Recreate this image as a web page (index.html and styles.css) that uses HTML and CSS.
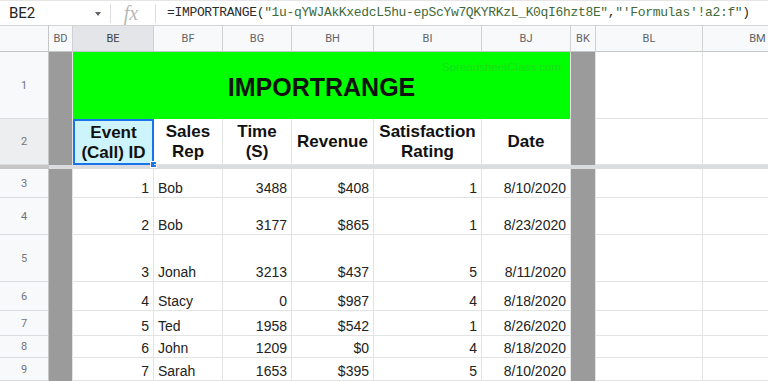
FILE: index.html
```html
<!DOCTYPE html>
<html>
<head>
<meta charset="utf-8">
<link rel="stylesheet" href="styles.css">
</head>
<body>
<div class="fbar">
  <div class="namebox"><span class="nb-text">BE2</span><span class="nb-arrow"></span></div>
  <div class="fdiv"></div>
  <div class="fx">fx</div>
  <div class="fdiv"></div>
  <div class="formula"><span class="fk">=IMPORTRANGE(</span><span class="fs">"1u-qYWJAkKxedcL5hu-epScYw7QKYRKzL_K0qI6hzt8E"</span><span class="fk">,</span><span class="fs">"'Formulas'!a2:f"</span><span class="fk">)</span></div>
</div>
<div class="sheet">
  <div class="corner"></div>
  <div class="ch">BD</div>
  <div class="ch sel">BE</div>
  <div class="ch">BF</div>
  <div class="ch">BG</div>
  <div class="ch">BH</div>
  <div class="ch">BI</div>
  <div class="ch">BJ</div>
  <div class="ch">BK</div>
  <div class="ch">BL</div>
  <div class="ch">BM</div>

  <div class="rh">1</div>
  <div class="gut"></div>
  <div class="title">IMPORTRANGE<span class="wm">SpreadsheetClass.com</span></div>
  <div class="gut"></div>
  <div class="c"></div>
  <div class="c"></div>

  <div class="rh rsel">2</div>
  <div class="gut"></div>
  <div class="c hd active">Event<br>(Call) ID<span class="handle"></span></div>
  <div class="c hd">Sales<br>Rep</div>
  <div class="c hd">Time<br>(S)</div>
  <div class="c hd">Revenue</div>
  <div class="c hd">Satisfaction<br>Rating</div>
  <div class="c hd">Date</div>
  <div class="gut"></div>
  <div class="c"></div>
  <div class="c"></div>

  <div class="sep-rh"></div>
  <div class="sep"></div>

  <div class="rh">3</div><div class="gut"></div>
  <div class="c r">1</div><div class="c">Bob</div><div class="c r">3488</div><div class="c r">$408</div><div class="c r">1</div><div class="c r">8/10/2020</div>
  <div class="gut"></div><div class="c"></div><div class="c"></div>

  <div class="rh">4</div><div class="gut"></div>
  <div class="c r">2</div><div class="c">Bob</div><div class="c r">3177</div><div class="c r">$865</div><div class="c r">1</div><div class="c r">8/23/2020</div>
  <div class="gut"></div><div class="c"></div><div class="c"></div>

  <div class="rh">5</div><div class="gut"></div>
  <div class="c r">3</div><div class="c">Jonah</div><div class="c r">3213</div><div class="c r">$437</div><div class="c r">5</div><div class="c r">8/11/2020</div>
  <div class="gut"></div><div class="c"></div><div class="c"></div>

  <div class="rh">6</div><div class="gut"></div>
  <div class="c r">4</div><div class="c">Stacy</div><div class="c r">0</div><div class="c r">$987</div><div class="c r">4</div><div class="c r">8/18/2020</div>
  <div class="gut"></div><div class="c"></div><div class="c"></div>

  <div class="rh">7</div><div class="gut"></div>
  <div class="c r">5</div><div class="c">Ted</div><div class="c r">1958</div><div class="c r">$542</div><div class="c r">1</div><div class="c r">8/26/2020</div>
  <div class="gut"></div><div class="c"></div><div class="c"></div>

  <div class="rh">8</div><div class="gut"></div>
  <div class="c r">6</div><div class="c">John</div><div class="c r">1209</div><div class="c r">$0</div><div class="c r">4</div><div class="c r">8/18/2020</div>
  <div class="gut"></div><div class="c"></div><div class="c"></div>

  <div class="rh">9</div><div class="gut"></div>
  <div class="c r">7</div><div class="c">Sarah</div><div class="c r">1653</div><div class="c r">$395</div><div class="c r">5</div><div class="c r">8/10/2020</div>
  <div class="gut"></div><div class="c"></div><div class="c"></div>
</div>
</body>
</html>
```
FILE: styles.css
```css
* { box-sizing: border-box; }
html, body {
  margin: 0;
  padding: 0;
  background: #fff;
  width: 768px;
  height: 382px;
  overflow: hidden;
  font-family: "Liberation Sans", Arial, sans-serif;
  color: #222;
}

.fbar {
  height: 26px;
  display: flex;
  align-items: center;
  border-top: 1px solid #e6e6e6;
  border-bottom: 1px solid #d4d4d4;
  background: #fff;
}
.namebox {
  width: 110px;
  display: flex;
  align-items: center;
  justify-content: space-between;
  padding: 0 9px 0 9px;
  font-family: Roboto, "Liberation Sans", sans-serif;
  font-size: 15px;
  color: #222;
}
.nb-arrow {
  width: 0;
  height: 0;
  border-left: 3px solid transparent;
  border-right: 3px solid transparent;
  border-top: 4px solid #5f6368;
  margin-top: 2px;
}
.fdiv {
  width: 1px;
  height: 19px;
  background: #dadce0;
}
.fx {
  width: 44px;
  text-align: center;
  font-family: "Liberation Serif", serif;
  font-style: italic;
  font-size: 20px;
  color: #b8b8b8;
  line-height: 22px;
  padding-right: 4px;
}
.formula {
  padding-left: 11px;
  font-family: "Liberation Mono", "DejaVu Sans Mono", monospace;
  font-size: 13px;
  letter-spacing: -0.33px;
  white-space: nowrap;
  line-height: 22px;
}
.fk { color: #2b2b2b; }
.fs { color: #3f6a3a; }

.sheet {
  display: grid;
  grid-template-columns: 49px 24px 81px 69px 69px 82px 108px 89px 25px 107px 110px;
  grid-template-rows: 26px 67px 46px 4px 29px 37px 47px 29px 25px 22px 23px;
  width: 768px;
  overflow: hidden;
}

.corner {
  background: #f8f9fa;
  border-right: 1px solid #c4c7c5;
  border-bottom: 1px solid #c4c7c5;
}
.ch {
  background: #f8f9fa;
  border-right: 1px solid #d0d0d0;
  border-bottom: 1px solid #c4c7c5;
  font-family: Roboto, "Liberation Sans", sans-serif;
  font-size: 11px;
  color: #5f6368;
  display: flex;
  align-items: center;
  justify-content: center;
}
.ch.sel {
  background: #e3e5e8;
  color: #3c4043;
}

.rh {
  background: #f8f9fa;
  border-right: 1px solid #c4c7c5;
  border-bottom: 1px solid #dadce0;
  font-family: Roboto, "Liberation Sans", sans-serif;
  font-size: 11px;
  color: #70757a;
  display: flex;
  align-items: center;
  justify-content: center;
}
.rh.rsel { background: #eceef0; }

.gut {
  background: #9b9b9b;
  border-right: 1px solid #e2e3e3;
}

.title {
  grid-column: span 6;
  position: relative;
  background: #00ff00;
  border-right: 1px solid #e2e3e3;
  display: flex;
  align-items: center;
  justify-content: center;
  padding-top: 3px;
  font-weight: bold;
  font-size: 25px;
  color: #111;
}
.wm {
  position: absolute;
  right: 9px;
  top: 9px;
  font-weight: normal;
  font-size: 11.5px;
  color: #19e019;
}

.c {
  position: relative;
  border-right: 1px solid #e2e3e3;
  border-bottom: 1px solid #e2e3e3;
  display: flex;
  align-items: flex-end;
  padding: 0 4px 1px 4px;
  font-size: 14px;
  line-height: 16px;
  color: #222;
  white-space: nowrap;
}
.c.r { justify-content: flex-end; }

.c.hd {
  align-items: center;
  justify-content: center;
  text-align: center;
  font-weight: bold;
  font-size: 17px;
  line-height: 20px;
  padding: 1px 2px 0 2px;
  color: #111;
}
.c.active {
  background: #cdf3fb;
  border: 2px solid #1a73e8;
}
.handle {
  position: absolute;
  right: -5px;
  bottom: -5px;
  width: 7px;
  height: 7px;
  background: #1a73e8;
  border: 1px solid #fff;
}

.sep-rh { background: #c6c6c6; }
.sep {
  grid-column: span 10;
  background: #dadcdf;
}
```
